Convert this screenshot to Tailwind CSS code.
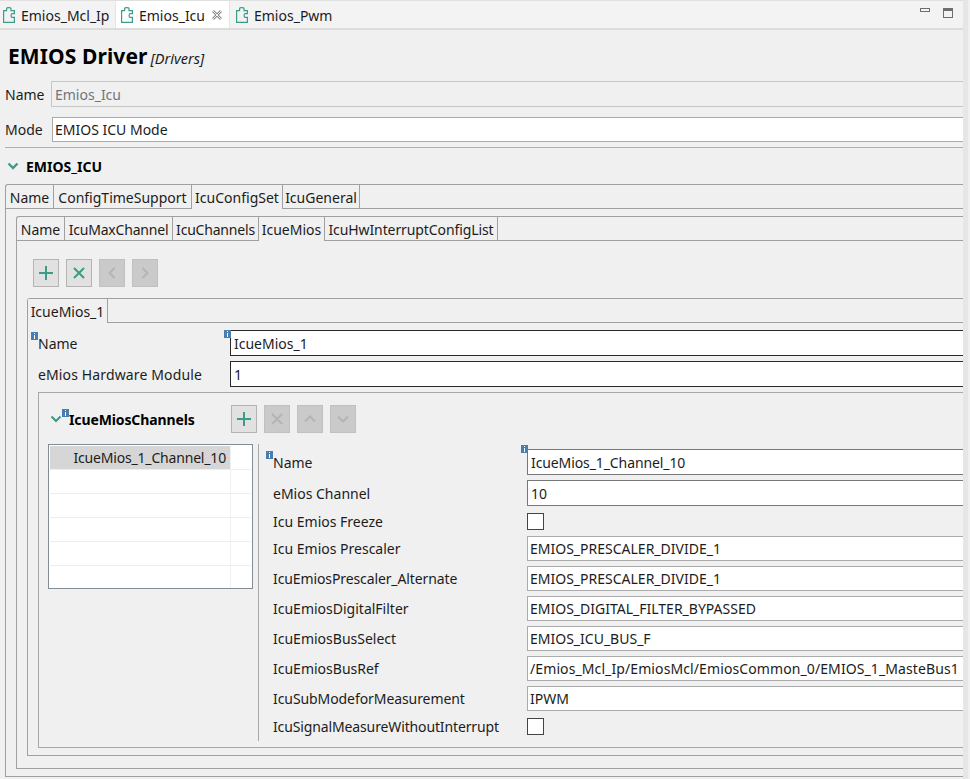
<!DOCTYPE html>
<html lang="en">
<head>
    <meta charset="UTF-8">
    <title>Emios_Icu</title>
    <script src="https://cdn.jsdelivr.net/npm/@tailwindcss/browser@4"></script>
</head>
<body class="h-[779px] w-[970px] overflow-hidden bg-[#f0f0f0] font-['Noto_Sans',sans-serif] text-[14px] leading-none text-[#1c1c1c]">
<div class="flex">
<div class="h-[779px] w-[963px] shrink-0 overflow-hidden">

    <!-- Editor tabs -->
    <div class="flex h-[30px] items-stretch border-t border-b-2 border-t-[#e0e0e0] border-b-[#dcdcdc] bg-[#f3f3f3]">
        <div class="flex w-[115px] items-center gap-[5px] pl-[3px]">
            <svg width="13" height="16" viewBox="0 0 13 16" fill="none" stroke="#3b9c87" stroke-width="1.2"><path d="M.6 3.6h3V1.4c0-1 4.4-1 4.4 0v2.2h3.4v3H9c-1.2 0-1.2 3.8 0 3.8h2.4v5H.6z"/></svg>
            <span class="pt-[2px]">Emios_Mcl_Ip</span>
        </div>
        <div class="flex w-[115px] items-center gap-[5px] border-x border-[#e4e4e4] bg-white pl-[5px]">
            <svg width="13" height="16" viewBox="0 0 13 16" fill="none" stroke="#3b9c87" stroke-width="1.2"><path d="M.6 3.6h3V1.4c0-1 4.4-1 4.4 0v2.2h3.4v3H9c-1.2 0-1.2 3.8 0 3.8h2.4v5H.6z"/></svg>
            <span class="pt-[2px]">Emios_Icu</span>
            <svg class="ml-[2px]" width="10" height="10" viewBox="0 0 10 10" fill="none"><path d="M1 1l8 8M9 1L1 9" stroke="#8a8a8a" stroke-width="2.6"/><path d="M1 1l8 8M9 1L1 9" stroke="#f4f4f4" stroke-width="1"/></svg>
        </div>
        <div class="flex items-center gap-[5px] pl-[6px]">
            <svg width="13" height="16" viewBox="0 0 13 16" fill="none" stroke="#3b9c87" stroke-width="1.2"><path d="M.6 3.6h3V1.4c0-1 4.4-1 4.4 0v2.2h3.4v3H9c-1.2 0-1.2 3.8 0 3.8h2.4v5H.6z"/></svg>
            <span class="pt-[2px]">Emios_Pwm</span>
        </div>
        <div class="ml-auto flex gap-[13px] pt-[7px] pr-[10px]">
            <div class="h-[4px] w-[10px] border border-[#6e6e6e]"></div>
            <div class="h-[10px] w-[10px] border border-[#6e6e6e] border-t-[3px]"></div>
        </div>
    </div>

    <!-- Form heading -->
    <div class="flex h-[51px] items-center pl-[8px] pt-[1px]">
        <span class="text-[21px] font-bold tracking-[0.1px] text-black">EMIOS Driver</span>
        <span class="ml-[3px] mt-[5px] text-[14.5px] italic">[Drivers]</span>
    </div>

    <div class="flex h-[26px] items-center pl-[5px]">
        <span class="w-[46px] pt-[2px]">Name</span>
        <div class="flex h-full flex-1 items-center border border-r-0 border-[#c6c6c6] pl-[3px] pt-[2px] text-[#70757c]">Emios_Icu</div>
    </div>
    <div class="mt-[10px] flex h-[25px] items-center pl-[5px]">
        <span class="w-[47px]">Mode</span>
        <div class="flex h-full flex-1 items-center border border-r-0 border-[#ababab] bg-white pl-[2px]">EMIOS ICU Mode</div>
    </div>

    <div class="ml-[5px] mt-[5px] border-t border-[#b0b0b0]"></div>

    <div class="flex h-[36px] items-center pl-[7px]">
        <svg width="12" height="8" viewBox="0 0 12 8" fill="none"><path d="M1.5 1.5L6 6l4.5-4.5" stroke="#3b9c87" stroke-width="2.4"/></svg>
        <span class="ml-[7px] pt-[2px] font-bold text-black">EMIOS_ICU</span>
    </div>

    <!-- ConfigSet folder -->
    <div class="ml-[5px] rounded-tl-[3px] border border-r-0 border-[#a0a0a0] pb-[7px]">
        <div class="flex h-[24px] border-b border-[#a0a0a0]">
            <div class="flex w-[48px] items-center justify-center border-r border-[#a0a0a0] pt-[2px]">Name</div>
            <div class="flex w-[138px] items-center justify-center border-r border-[#a0a0a0] pt-[2px]">ConfigTimeSupport</div>
            <div class="relative -mb-px flex w-[91px] items-center justify-center border-r border-[#a0a0a0] bg-[#f0f0f0] pt-[2px]">IcuConfigSet</div>
            <div class="flex w-[77px] items-center justify-center border-r border-[#a0a0a0] pt-[2px]">IcuGeneral</div>
        </div>

        <!-- IcueMios folder -->
        <div class="ml-[10px] mt-[7px] rounded-tl-[3px] border border-r-0 border-[#a0a0a0] pb-[12px]">
            <div class="flex h-[24px] border-b border-[#a0a0a0]">
                <div class="flex w-[48px] items-center justify-center border-r border-[#a0a0a0] pt-[2px]">Name</div>
                <div class="flex w-[108px] items-center justify-center border-r border-[#a0a0a0] pt-[2px] tracking-[-0.2px]">IcuMaxChannel</div>
                <div class="flex w-[86px] items-center justify-center border-r border-[#a0a0a0] pt-[2px] tracking-[-0.2px]">IcuChannels</div>
                <div class="relative -mb-px flex w-[66px] items-center justify-center border-r border-[#a0a0a0] bg-[#f0f0f0] pt-[2px]">IcueMios</div>
                <div class="flex w-[173px] items-center justify-center border-r border-[#a0a0a0] pt-[2px] tracking-[-0.1px]">IcuHwInterruptConfigList</div>
            </div>

            <div class="ml-[16px] mt-[18px] flex gap-[7px]">
                <div class="flex h-[28px] w-[26px] items-center justify-center border border-[#b4b4b4] bg-[#e1e1e1]">
                    <svg width="14" height="14" viewBox="0 0 14 14"><path d="M7 0v14M0 7h14" stroke="#3b9c87" stroke-width="2"/></svg>
                </div>
                <div class="flex h-[28px] w-[26px] items-center justify-center border border-[#b4b4b4] bg-[#e1e1e1]">
                    <svg width="12" height="12" viewBox="0 0 12 12"><path d="M1 1l10 10M11 1L1 11" stroke="#3b9c87" stroke-width="2"/></svg>
                </div>
                <div class="flex h-[28px] w-[26px] items-center justify-center border border-[#c0c0c0] bg-[#cacaca]">
                    <svg width="8" height="12" viewBox="0 0 8 12" fill="none"><path d="M6.5 1L1.5 6l5 5" stroke="#b4b4b4" stroke-width="2"/></svg>
                </div>
                <div class="flex h-[28px] w-[26px] items-center justify-center border border-[#c0c0c0] bg-[#cacaca]">
                    <svg width="8" height="12" viewBox="0 0 8 12" fill="none"><path d="M1.5 1l5 5-5 5" stroke="#b4b4b4" stroke-width="2"/></svg>
                </div>
            </div>

            <!-- IcueMios_1 folder -->
            <div class="ml-[10px] mt-[11px] rounded-tl-[3px] border border-r-0 border-[#a0a0a0] pb-[7px]">
                <div class="flex h-[24px] border-b border-[#a0a0a0]">
                    <div class="relative -mb-px flex w-[80px] items-center justify-center border-r border-[#a0a0a0] bg-[#f0f0f0] pt-[2px]">IcueMios_1</div>
                </div>

                <div class="mt-[7px] flex h-[26px] items-center pl-[10px]">
                    <div class="relative w-[192px] pt-[2px]">
                        <svg class="absolute -left-[7px] -top-[3px]" width="7" height="8" viewBox="0 0 7 8"><rect width="7" height="8" fill="#4a7db0"/><path d="M3.5 1v1M3.5 3v4" stroke="#fff"/></svg>
                        <span>Name</span>
                        <svg class="absolute -right-px -top-[5px]" width="7" height="8" viewBox="0 0 7 8"><rect width="7" height="8" fill="#4a7db0"/><path d="M3.5 1v1M3.5 3v4" stroke="#fff"/></svg>
                    </div>
                    <div class="flex h-full flex-1 items-center border border-r-0 border-[#2a2a2a] bg-white pl-[3px] pt-[2px]">IcueMios_1</div>
                </div>
                <div class="mt-[5px] flex h-[26px] items-center pl-[10px]">
                    <span class="w-[192px] pt-[2px] tracking-[0.13px]">eMios Hardware Module</span>
                    <div class="flex h-full flex-1 items-center border border-r-0 border-[#2a2a2a] bg-white pl-[3px] pt-[2px]">1</div>
                </div>

                <!-- IcueMiosChannels section -->
                <div class="ml-[10px] mt-[5px] border-y border-l border-[#a8a8a8] pb-[6px]">
                    <div class="mt-[12px] flex h-[28px]">
                        <div class="relative flex w-[192px] items-center pl-[11px]">
                            <svg width="12" height="8" viewBox="0 0 12 8" fill="none"><path d="M1.5 1.5L6 6l4.5-4.5" stroke="#3b9c87" stroke-width="2.2"/></svg>
                            <svg class="absolute left-[23px] top-[4px]" width="7" height="8" viewBox="0 0 7 8"><rect width="7" height="8" fill="#4a7db0"/><path d="M3.5 1v1M3.5 3v4" stroke="#fff"/></svg>
                            <span class="ml-[7px] pt-[2px] font-bold tracking-[-0.12px] text-black">IcueMiosChannels</span>
                        </div>
                        <div class="flex gap-[7px]">
                            <div class="flex h-[28px] w-[26px] items-center justify-center border border-[#b4b4b4] bg-[#e1e1e1]">
                                <svg width="14" height="14" viewBox="0 0 14 14"><path d="M7 0v14M0 7h14" stroke="#3b9c87" stroke-width="2"/></svg>
                            </div>
                            <div class="flex h-[28px] w-[26px] items-center justify-center border border-[#c0c0c0] bg-[#cacaca]">
                                <svg width="12" height="12" viewBox="0 0 12 12"><path d="M1 1l10 10M11 1L1 11" stroke="#b4b4b4" stroke-width="2"/></svg>
                            </div>
                            <div class="flex h-[28px] w-[26px] items-center justify-center border border-[#c0c0c0] bg-[#cacaca]">
                                <svg width="12" height="8" viewBox="0 0 12 8" fill="none"><path d="M1 6.5l5-5 5 5" stroke="#b4b4b4" stroke-width="2"/></svg>
                            </div>
                            <div class="flex h-[28px] w-[26px] items-center justify-center border border-[#c0c0c0] bg-[#cacaca]">
                                <svg width="12" height="8" viewBox="0 0 12 8" fill="none"><path d="M1 1.5l5 5 5-5" stroke="#b4b4b4" stroke-width="2"/></svg>
                            </div>
                        </div>
                    </div>

                    <div class="mt-[11px] flex">
                        <!-- Channel list -->
                        <div class="ml-[9px] h-[145px] w-[205px] shrink-0 border border-[#848c94] bg-white p-px">
                            <div class="flex h-[24px] border-b border-[#eeeeee]"><div class="flex w-[180px] items-center justify-end bg-[#d6d6d6] pr-[4px] tracking-[-0.18px]">IcueMios_1_Channel_10</div><div class="flex-1 border-l border-[#eef0f5]"></div></div>
                            <div class="flex h-[24px] border-b border-[#eeeeee]"><div class="w-[180px]"></div><div class="flex-1 border-l border-[#eef0f5]"></div></div>
                            <div class="flex h-[24px] border-b border-[#eeeeee]"><div class="w-[180px]"></div><div class="flex-1 border-l border-[#eef0f5]"></div></div>
                            <div class="flex h-[24px] border-b border-[#eeeeee]"><div class="w-[180px]"></div><div class="flex-1 border-l border-[#eef0f5]"></div></div>
                            <div class="flex h-[24px] border-b border-[#eeeeee]"><div class="w-[180px]"></div><div class="flex-1 border-l border-[#eef0f5]"></div></div>
                            <div class="flex h-[22px]"><div class="w-[180px]"></div><div class="flex-1 border-l border-[#eef0f5]"></div></div>
                        </div>

                        <div class="ml-[5px] w-px shrink-0 bg-[#a8a8a8]"></div>

                        <!-- Channel details -->
                        <div class="min-w-0 flex-1 pl-[14px] pt-[5px] pb-[6px]">
                            <div class="flex h-[26px] items-center">
                                <div class="relative w-[254px] pt-[2px]">
                                    <svg class="absolute -left-[7px] -top-[3px]" width="7" height="8" viewBox="0 0 7 8"><rect width="7" height="8" fill="#4a7db0"/><path d="M3.5 1v1M3.5 3v4" stroke="#fff"/></svg>
                                    <span>Name</span>
                                    <svg class="absolute -right-px -top-[9px]" width="7" height="8" viewBox="0 0 7 8"><rect width="7" height="8" fill="#4a7db0"/><path d="M3.5 1v1M3.5 3v4" stroke="#fff"/></svg>
                                </div>
                                <div class="flex h-full flex-1 items-center border border-r-0 border-[#777777] bg-white pl-[3px] pt-[2px] tracking-[-0.1px]">IcueMios_1_Channel_10</div>
                            </div>
                            <div class="mt-[5px] flex h-[26px] items-center">
                                <span class="w-[254px] pt-[2px]">eMios Channel</span>
                                <div class="flex h-full flex-1 items-center border border-r-0 border-[#777777] bg-white pl-[3px] pt-[2px]">10</div>
                            </div>
                            <div class="mt-[7px] flex h-[17px] items-center">
                                <span class="w-[254px]">Icu Emios Freeze</span>
                                <div class="h-[17px] w-[17px] border border-[#444444] bg-white"></div>
                            </div>
                            <div class="mt-[6px] flex h-[25px] items-center">
                                <span class="w-[254px]">Icu Emios Prescaler</span>
                                <div class="flex h-full flex-1 items-center border border-r-0 border-[#ababab] bg-white pl-[2px]">EMIOS_PRESCALER_DIVIDE_1</div>
                            </div>
                            <div class="mt-[5px] flex h-[25px] items-center">
                                <span class="w-[254px] tracking-[-0.11px]">IcuEmiosPrescaler_Alternate</span>
                                <div class="flex h-full flex-1 items-center border border-r-0 border-[#ababab] bg-white pl-[2px]">EMIOS_PRESCALER_DIVIDE_1</div>
                            </div>
                            <div class="mt-[5px] flex h-[25px] items-center">
                                <span class="w-[254px]">IcuEmiosDigitalFilter</span>
                                <div class="flex h-full flex-1 items-center border border-r-0 border-[#ababab] bg-white pl-[2px]">EMIOS_DIGITAL_FILTER_BYPASSED</div>
                            </div>
                            <div class="mt-[5px] flex h-[25px] items-center">
                                <span class="w-[254px]">IcuEmiosBusSelect</span>
                                <div class="flex h-full flex-1 items-center border border-r-0 border-[#ababab] bg-white pl-[2px]">EMIOS_ICU_BUS_F</div>
                            </div>
                            <div class="mt-[5px] flex h-[25px] items-center">
                                <span class="w-[254px]">IcuEmiosBusRef</span>
                                <div class="flex h-full flex-1 items-center border border-r-0 border-[#ababab] bg-white pl-[2px] tracking-[0.1px]">/Emios_Mcl_Ip/EmiosMcl/EmiosCommon_0/EMIOS_1_MasteBus1</div>
                            </div>
                            <div class="mt-[5px] flex h-[25px] items-center">
                                <span class="w-[254px] tracking-[-0.08px]">IcuSubModeforMeasurement</span>
                                <div class="flex h-full flex-1 items-center border border-r-0 border-[#ababab] bg-white pl-[2px]">IPWM</div>
                            </div>
                            <div class="mt-[7px] flex h-[17px] items-center">
                                <span class="w-[254px] tracking-[-0.13px]">IcuSignalMeasureWithoutInterrupt</span>
                                <div class="h-[17px] w-[17px] border border-[#444444] bg-white"></div>
                            </div>
                        </div>
                    </div>
                </div>
            </div>
        </div>
    </div>
</div>
<div class="h-[779px] w-[5px] shrink-0 bg-[#e6e6e6]"></div>
</div>
</body>
</html>
